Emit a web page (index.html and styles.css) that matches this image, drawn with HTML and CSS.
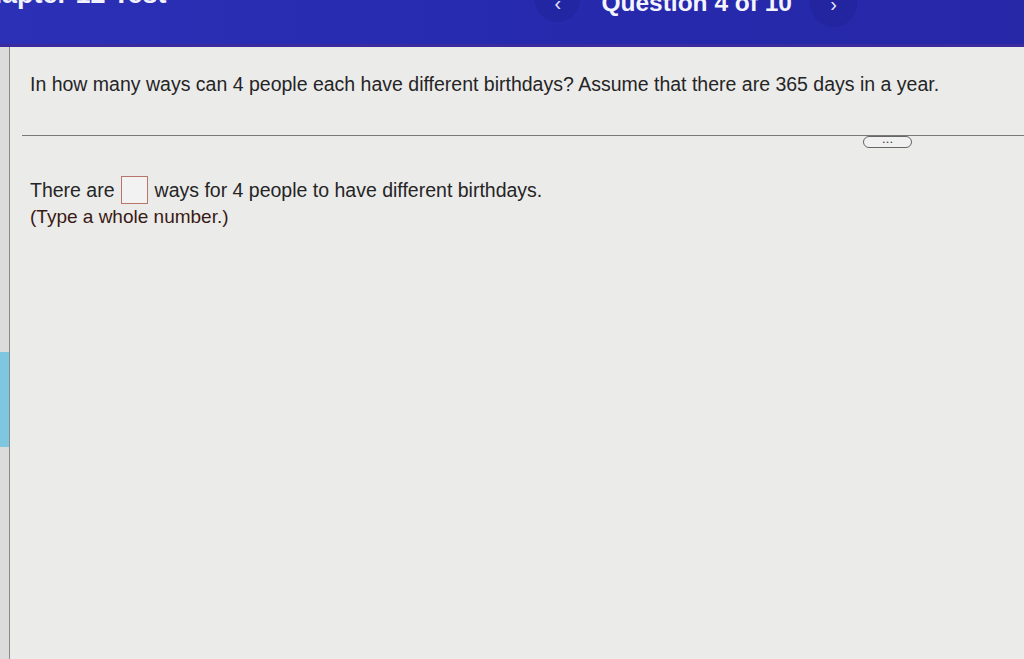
FILE: index.html
```html
<!DOCTYPE html>
<html>
<head>
<meta charset="utf-8">
<link rel="stylesheet" href="styles.css">
</head>
<body>
<div class="page">
  <header class="topbar">
    <div class="title">Chapter 12 Test</div>
    <div class="nav">
      <span class="arrow arrow-left">‹</span>
      <span class="qnum">Question 4 of 10</span>
      <span class="arrow arrow-right">›</span>
    </div>
  </header>
  <div class="body">
    <aside class="side"><div class="side-mark"></div></aside>
    <main class="main">
      <p class="question">In how many ways can 4 people each have different birthdays? Assume that there are 365 days in a year.</p>
      <div class="divider"><span class="pill">• • •</span></div>
      <p class="answer"><span>There are</span><span class="box"></span><span>ways for 4 people to have different birthdays.</span></p>
      <p class="hint">(Type a whole number.)</p>
    </main>
  </div>
</div>
</body>
</html>
```
FILE: styles.css
```css
html, body {
  margin: 0;
  padding: 0;
  width: 1024px;
  height: 659px;
  overflow: hidden;
  background: #e9e9e8;
  font-family: "Liberation Sans", Arial, sans-serif;
  color: #252525;
}
.page {
  display: flex;
  flex-direction: column;
  height: 659px;
}
.topbar {
  height: 44px;
  background: linear-gradient(90deg, #2b30b6 0%, #2629ac 60%, #2628a8 100%);
  border-bottom: 3px solid #3b2b9c;
  display: flex;
  align-items: flex-start;
  color: #fff;
  overflow: hidden;
  flex: none;
}
.title {
  font-size: 27px;
  font-weight: bold;
  margin-top: -21px;
  margin-left: -34px;
  white-space: nowrap;
  color: #f2f2ff;
}
.nav {
  display: flex;
  align-items: flex-start;
  margin-left: auto;
  margin-right: 167px;
}
.arrow {
  width: 45px;
  height: 44px;
  border-radius: 50%;
  background: #2326a2;
  margin-top: -22px;
  display: flex;
  align-items: flex-start;
  justify-content: center;
  padding-top: 15px;
  box-sizing: border-box;
  font-size: 20px;
  line-height: 20px;
  color: #e6e6ff;
}
.arrow-right {
  margin-left: 18px;
  width: 47px;
  height: 48px;
  margin-top: -21px;
  padding-top: 15px;
  background: #2224a0;
}
.qnum {
  font-size: 24.5px;
  font-weight: bold;
  margin-top: -11px;
  margin-left: 21px;
  white-space: nowrap;
  color: #f4f4ff;
}
.body {
  flex: 1;
  display: flex;
}
.side {
  width: 9px;
  background: #dcdcdc;
  border-right: 1px solid #8a8a8a;
  flex: none;
  padding-top: 305px;
}
.side-mark {
  height: 95px;
  background: #7ec7df;
}
.main {
  flex: 1;
  padding-top: 25px;
  background: #ebebea;
}
.question {
  margin: 0 0 0 20px;
  font-size: 19.5px;
  line-height: 24px;
}
.divider {
  margin: 39px 0 0 12px;
  border-top: 1px solid #7a7a7a;
  position: relative;
  height: 0;
}
.pill {
  position: absolute;
  left: 841px;
  top: 0;
  width: 47px;
  height: 10px;
  border: 1px solid #666;
  border-radius: 6px;
  background: #f0f0f0;
  font-size: 6px;
  line-height: 10px;
  text-align: center;
  color: #444;
}
.answer {
  margin: 40px 0 0 20px;
  font-size: 19.5px;
  line-height: 28px;
  display: flex;
  align-items: center;
}
.box {
  display: inline-block;
  width: 25px;
  height: 26px;
  border: 1px solid #b8766a;
  background: #f2f2f2;
  margin: 0 7px 0 6px;
}
.hint {
  margin: 0 0 0 20px;
  font-size: 19px;
  line-height: 26px;
  color: #3a1a14;
}
```
